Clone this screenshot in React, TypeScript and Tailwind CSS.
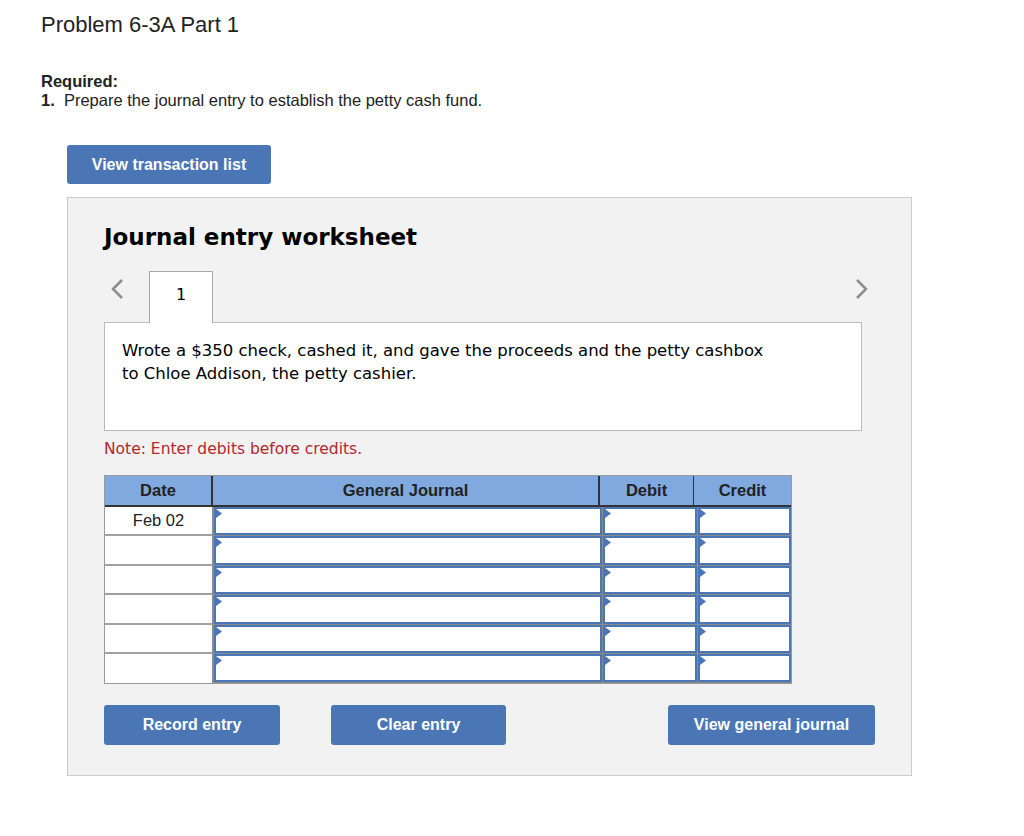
import React from 'react';

const blue = 'bg-[#4a76b5]';

const rows = ['Feb 02', '', '', '', '', ''];

// small blue marker at the top-left of an input cell
const Marker = () => (
  <svg className="absolute left-0 top-0" width="6" height="9" viewBox="0 0 6 9">
    <path d="M0 0 L6 4.5 L0 9 Z" fill="#4a76b5" />
  </svg>
);

const InputCell: React.FC<{ w: string }> = ({ w }) => (
  <div className={`${w} h-[29.4px] border-l border-b border-[#8a8a8a] bg-[#8a8a8a]`}>
    <div className="relative h-full w-full border-2 border-[#4a76b5] bg-white">
      <Marker />
    </div>
  </div>
);

const BlueButton: React.FC<{ label: string; className?: string }> = ({ label, className }) => (
  <button className={`${blue} h-10 rounded-[3px] text-[16px] font-bold text-white ${className ?? ''}`}>
    {label}
  </button>
);

export default function App() {
  return (
    <div className="min-h-[836px] w-[1024px] bg-white font-['Liberation_Sans',Arial,sans-serif] text-[#222]">
      <div className="pl-[41px] pt-[12px]">
        <h1 className="text-[22px] leading-[26px] text-[#222]">Problem 6-3A Part 1</h1>

        <div className="mt-[34px] text-[16.5px] leading-[19px]">
          <div className="font-bold">Required:</div>
          <div>
            <span className="font-bold">1.</span>&nbsp; Prepare the journal entry to establish the petty cash fund.
          </div>
        </div>
      </div>

      <div className="ml-[67px] mt-[35px]">
        <BlueButton label="View transaction list" className="w-[204px] h-[39px]" />
      </div>

      <div className="ml-[67px] mt-[13px] h-[579px] w-[845px] border border-[#cccccc] bg-[#f2f2f2] pl-[36px] pr-[49px]">
        <h2 className="mt-[24px] font-['DejaVu_Sans',Verdana,sans-serif] text-[23px] font-bold leading-[30px] text-black">
          Journal entry worksheet
        </h2>

        {/* tab strip */}
        <div className="-mr-[22px] mt-[18px] flex items-end">
          <div className="flex h-[52px] w-[45px] items-start pl-[6px] pt-[7px]">
            <svg width="14" height="24" viewBox="0 0 14 24">
              <path d="M12 3 L3 12 L12 21" stroke="#8c8c8c" strokeWidth="2.5" fill="none" />
            </svg>
          </div>
          <div className="relative z-10 -mb-px flex h-[52px] w-[64px] items-start justify-center border border-b-0 border-[#aaaaaa] bg-white pt-[11px] font-['DejaVu_Sans',Verdana,sans-serif] text-[16px] text-black">
            1
          </div>
          <div className="flex-1" />
          <div className="flex h-[52px] w-[30px] items-start pt-[7px]">
            <svg width="14" height="24" viewBox="0 0 14 24">
              <path d="M3 3 L12 12 L3 21" stroke="#8c8c8c" strokeWidth="2.5" fill="none" />
            </svg>
          </div>
        </div>

        <div className="h-[109px] w-[758px] border border-[#bbbbbb] bg-white px-[17px] pt-[16px] font-['DejaVu_Sans',Verdana,sans-serif] text-[16.5px] leading-[23px] text-black">
          Wrote a $350 check, cashed it, and gave the proceeds and the petty cashbox
          <br />
          to Chloe Addison, the petty cashier.
        </div>

        <div className="mt-[8px] font-['DejaVu_Sans',Verdana,sans-serif] text-[15.5px] leading-[20px] text-[#b3282d]">
          Note: Enter debits before credits.
        </div>

        {/* journal table */}
        <div className="mt-[16px] w-[688px] border border-[#9a9a9a]">
          <div className="flex h-[31px] border-b-2 border-[#333] bg-[#80a9df] text-[16.5px] font-bold text-[#222]">
            <div className="flex w-[108px] items-center justify-center border-r-2 border-[#333]">Date</div>
            <div className="flex w-[387px] items-center justify-center border-r-2 border-[#333]">General Journal</div>
            <div className="flex w-[94px] items-center justify-center border-r border-[#333]">Debit</div>
            <div className="flex flex-1 items-center justify-center">Credit</div>
          </div>
          {rows.map((d, i) => (
            <div key={i} className="flex">
              <div
                className={`flex h-[29.4px] w-[108px] items-center justify-center border-r border-[#8a8a8a] bg-white text-[16.5px] text-[#222] ${
                  i < rows.length - 1 ? 'border-b-2 border-b-[#a0a0a0]' : ''
                }`}
              >
                {d}
              </div>
              <InputCell w="w-[389px]" />
              <InputCell w="w-[95px]" />
              <InputCell w="flex-1" />
            </div>
          ))}
        </div>

        <div className="mt-[21px] flex w-[771px]">
          <BlueButton label="Record entry" className="w-[176px]" />
          <BlueButton label="Clear entry" className="ml-[51px] w-[175px]" />
          <div className="flex-1" />
          <BlueButton label="View general journal" className="w-[207px]" />
        </div>
      </div>
    </div>
  );
}
